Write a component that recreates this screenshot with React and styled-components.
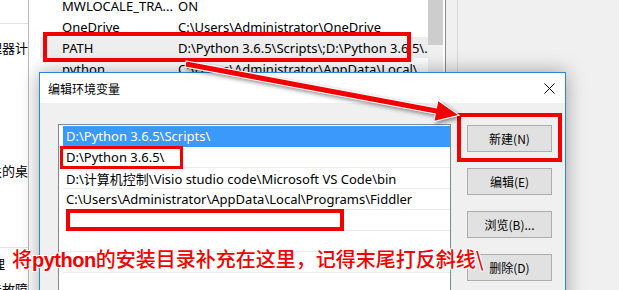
import React from "react";
import styled, { createGlobalStyle } from "styled-components";

const GlobalStyle = createGlobalStyle`
  html, body {
    margin: 0;
    padding: 0;
    background: #f0f0f0;
  }
  body {
    font-family: "Noto Sans", "Noto Sans CJK SC", sans-serif;
  }
`;

const UI_FONT = `"Noto Sans", "Noto Sans CJK SC", sans-serif`;
const RED = "#f20000";

const Page = styled.div`
  position: relative;
  width: 619px;
  height: 290px;
  overflow: hidden;
  background: #f0f0f0;
  font-family: ${UI_FONT};
  color: #000;
`;

/* ---------- the window behind ---------- */

const BackWindow = styled.div`
  display: flex;
  height: 100%;
`;

const SidePanel = styled.div`
  width: 28px;
  flex-shrink: 0;
  background: #fff;
  box-shadow: 1px 0 2px rgba(0, 0, 0, 0.18);
  display: flex;
  flex-direction: column;
  overflow: hidden;
`;

const SideItem = styled.div`
  height: ${({ $h }) => $h}px;
  flex-shrink: 0;
  box-sizing: border-box;
  display: flex;
  align-items: center;
  justify-content: flex-end;
  white-space: nowrap;
  font-size: 13px;
  font-family: "Noto Sans CJK SC", sans-serif;
  padding-right: ${({ $pr }) => $pr || 0}px;
  border-bottom: ${({ $line }) => ($line ? "1px solid #e3e3e3" : "none")};
`;

const SideGap = styled.div`
  width: 11px;
  flex-shrink: 0;
  background: #fff;
  border-left: 1px solid #b9b9b9;
`;

const VarList = styled.div`
  width: 388px;
  flex-shrink: 0;
  background: #fff;
  display: flex;
  flex-direction: column;
  margin-top: -5px;
`;

const VarRow = styled.div`
  height: 21px;
  flex-shrink: 0;
  display: flex;
  align-items: center;
  font-size: 13px;
  white-space: nowrap;
  overflow: hidden;
  background: ${({ $active }) => ($active ? "#eeeeee" : "transparent")};
`;

const VarName = styled.div`
  width: 116px;
  padding-left: 22px;
  flex-shrink: 0;
`;

const VarValue = styled.div`
  flex: 1;
  overflow: hidden;
`;

const ScrollTrack = styled.div`
  width: 15px;
  flex-shrink: 0;
  background: #f0f0f0;
  border-right: 2px solid #fff;
`;

const ScrollThumb = styled.div`
  width: 15px;
  height: 45px;
  background: #cdcdcd;
`;

const PaneRest = styled.div`
  flex: 1;
  display: flex;
  border-left: 1px solid #8a8a8a;
`;

const PaneEdge = styled.div`
  width: 11px;
  border-right: 1px solid #d9d9d9;
`;

/* ---------- the dialog ---------- */

const Dialog = styled.div`
  position: absolute;
  left: 39px;
  top: 72px;
  width: 525px;
  height: 260px;
  border: 1px solid #2a86d6;
  background: #f0f0f0;
  box-shadow: 0 0 18px rgba(0, 0, 0, 0.35);
  display: flex;
  flex-direction: column;
  overflow: hidden;
`;

const TitleBar = styled.div`
  height: 30px;
  flex-shrink: 0;
  background: #fff;
  display: flex;
  align-items: center;
  justify-content: space-between;
  padding: 0 10px 0 8px;
  font-size: 12px;
  font-family: "Noto Sans CJK SC", sans-serif;
`;

const CloseBtn = styled.svg`
  width: 11px;
  height: 11px;
`;

const DialogBody = styled.div`
  display: flex;
  gap: 16px;
  padding: 21px 0 0 18px;
  flex-shrink: 0;
`;

const PathList = styled.div`
  width: 387px;
  height: 210px;
  flex-shrink: 0;
  border: 1px solid #828790;
  background: #fff;
  padding: 1px 0 0 4px;
  display: flex;
  flex-direction: column;
`;

const PathRow = styled.div`
  height: 21px;
  flex-shrink: 0;
  box-sizing: border-box;
  display: flex;
  align-items: center;
  padding-left: 3px;
  font-size: 13px;
  white-space: nowrap;
  background: ${({ $selected }) => ($selected ? "#3b99fc" : "#fff")};
  color: ${({ $selected }) => ($selected ? "#fff" : "#000")};
  border-bottom: 1px solid ${({ $selected }) => ($selected ? "#3b99fc" : "#ececec")};
`;

const ButtonColumn = styled.div`
  display: flex;
  flex-direction: column;
  gap: 16px;
  padding-top: 1px;
`;

const Button = styled.div`
  width: 83px;
  height: 25px;
  border: 1px solid #adadad;
  background: #e1e1e1;
  display: flex;
  align-items: center;
  justify-content: center;
  font-size: 12px;
  font-family: "Noto Sans CJK SC", sans-serif;
`;

/* ---------- annotations ---------- */

const MarkBox = styled.div`
  position: absolute;
  left: ${({ $x }) => $x}px;
  top: ${({ $y }) => $y}px;
  width: ${({ $w }) => $w}px;
  height: ${({ $h }) => $h}px;
  box-sizing: border-box;
  border: ${({ $t }) => $t || 3}px solid ${RED};
`;

const ArrowLayer = styled.svg`
  position: absolute;
  left: 0;
  top: 0;
  width: 619px;
  height: 290px;
  pointer-events: none;
  filter: drop-shadow(2px 2px 2px rgba(0, 0, 0, 0.45));
`;

const Note = styled.div`
  position: absolute;
  left: 12px;
  top: 246px;
  font-size: 20px;
  line-height: 26px;
  font-weight: 500;
  white-space: nowrap;
  color: ${RED};
  font-family: "Noto Sans CJK SC", sans-serif;
  text-shadow: 1px 0 #fff, -1px 0 #fff, 0 1px #fff, 0 -1px #fff,
    1px 1px #fff, -1px -1px #fff, 1px -1px #fff, -1px 1px #fff;
`;

const NoteLatin = styled.span`
  font-family: "Liberation Sans", sans-serif;
  font-weight: 700;
  letter-spacing: -0.5px;
`;

const vars = [
  { name: "MWLOCALE_TRA...", value: "ON" },
  { name: "OneDrive", value: "C:\\Users\\Administrator\\OneDrive" },
  { name: "PATH", value: "D:\\Python 3.6.5\\Scripts\\;D:\\Python 3.6.5\\...", active: true },
  { name: "python", value: "C:\\Users\\Administrator\\AppData\\Local\\" },
];

const paths = [
  { text: "D:\\Python 3.6.5\\Scripts\\", selected: true },
  { text: "D:\\Python 3.6.5\\" },
  { text: "D:\\计算机控制\\Visio studio code\\Microsoft VS Code\\bin" },
  { text: "C:\\Users\\Administrator\\AppData\\Local\\Programs\\Fiddler" },
  { text: "" },
  { text: "" },
  { text: "" },
  { text: "" },
  { text: "" },
];

const buttons = ["新建(N)", "编辑(E)", "浏览(B)...", "删除(D)"];

export default function App() {
  return (
    <>
      <GlobalStyle />
      <Page>
        <BackWindow>
          <SidePanel>
            <SideItem $h={24} $line />
            <SideItem $h={46}>管理器计</SideItem>
            <SideItem $h={76} />
            <SideItem $h={48}>相关的桌</SideItem>
            <SideItem $h={54} $line />
            <SideItem $h={30} $pr={23}>管理</SideItem>
            <SideItem $h={20}>击故障</SideItem>
          </SidePanel>
          <SideGap />
          <VarList>
            {vars.map((v) => (
              <VarRow key={v.name} $active={v.active}>
                <VarName>{v.name}</VarName>
                <VarValue>{v.value}</VarValue>
              </VarRow>
            ))}
          </VarList>
          <ScrollTrack>
            <ScrollThumb />
          </ScrollTrack>
          <PaneRest>
            <PaneEdge />
          </PaneRest>
        </BackWindow>

        <Dialog>
          <TitleBar>
            <span>编辑环境变量</span>
            <CloseBtn viewBox="0 0 11 11">
              <path d="M0.5 0.5 L10.5 10.5 M10.5 0.5 L0.5 10.5" stroke="#000" strokeWidth="1" />
            </CloseBtn>
          </TitleBar>
          <DialogBody>
            <PathList>
              {paths.map((p, i) => (
                <PathRow key={i} $selected={p.selected}>
                  {p.text}
                </PathRow>
              ))}
            </PathList>
            <ButtonColumn>
              {buttons.map((b) => (
                <Button key={b}>{b}</Button>
              ))}
            </ButtonColumn>
          </DialogBody>
        </Dialog>

        <MarkBox $x={43} $y={32} $w={368} $h={30} $t={4} />
        <MarkBox $x={60} $y={146} $w={123} $h={23} />
        <MarkBox $x={66} $y={209} $w={278} $h={22} $t={4} />
        <MarkBox $x={457} $y={113} $w={105} $h={49} $t={4} />

        <ArrowLayer viewBox="0 0 619 290">
          <polygon
            points="186.5,61.4 436.9,108.4 438.2,101.2 458,115 434.6,120.8 435.9,113.6 185.5,66.6"
            fill={RED}
            stroke="#fff"
            strokeWidth="2"
            strokeLinejoin="miter"
            paintOrder="stroke"
          />
        </ArrowLayer>

        <Note>
          将<NoteLatin>python</NoteLatin>的安装目录补充在这里，记得末尾打反斜线\
        </Note>
      </Page>
    </>
  );
}
